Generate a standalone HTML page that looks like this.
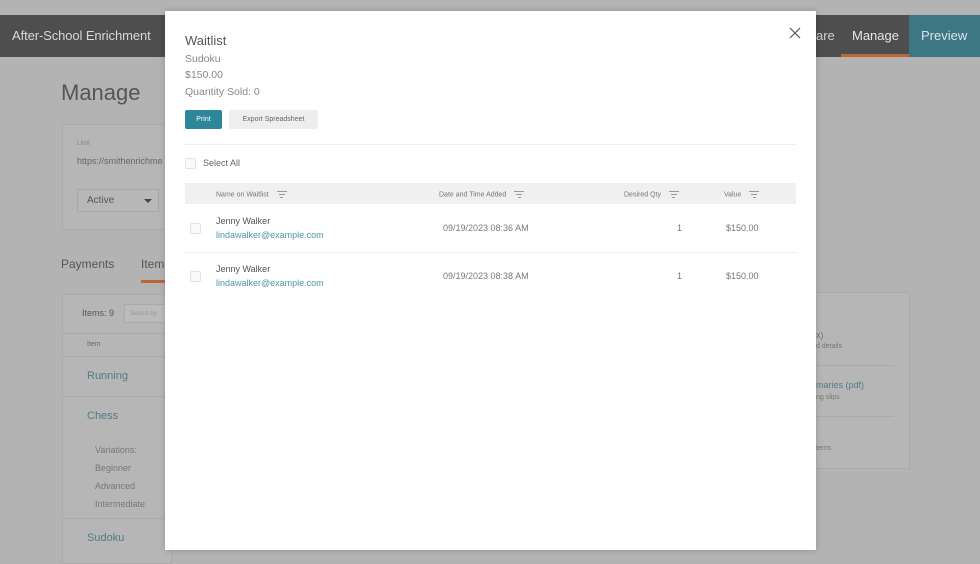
<!DOCTYPE html>
<html><head><meta charset="utf-8"><style>
*{box-sizing:border-box;margin:0;padding:0}
body{width:980px;height:560px;overflow:hidden;background:#b3b3b3;font-family:"Liberation Sans",sans-serif;position:relative;color:#5a5a5a}
.a{position:absolute;white-space:nowrap}
.nav{left:0;top:15px;width:980px;height:42px;background:#4e4e4e}
.panel{background:#b6b6b6;border:1px solid #ababab}
.modal{left:165px;top:11px;width:651px;height:539px;background:#fff;box-shadow:0 0 6px rgba(0,0,0,.2)}
.t{color:#888}
.cb{width:11px;height:11px;border:1px solid #e2e2e2;border-radius:2px;background:#fafafa}
.link{color:#4a98a5}
.fi{display:inline-block;width:10px;vertical-align:middle;margin-left:8px}
.fi i{display:block;height:1px;background:#999;margin:2px auto}
</style></head><body>
<div class="a nav"></div>
<div class="a" style="left:12px;top:28px;font-size:13px;color:#d8d8d8;letter-spacing:-0.1px">After-School Enrichment</div>
<div class="a" style="left:816px;top:28px;font-size:13px;color:#cfcfcf">are</div>
<div class="a" style="left:852px;top:28px;font-size:13px;color:#e6e6e6">Manage</div>
<div class="a" style="left:841px;top:54px;width:68px;height:3px;background:#c0643a"></div>
<div class="a" style="left:909px;top:15px;width:71px;height:42px;background:#3c7783"></div>
<div class="a" style="left:921px;top:28px;font-size:13px;color:#d6e6ea">Preview</div>

<div class="a" style="left:61px;top:80px;font-size:22px;color:#555">Manage</div>
<div class="a panel" style="left:62px;top:124px;width:120px;height:106px"></div>
<div class="a" style="left:77px;top:141px;font-size:6px;color:#888">LINK</div>
<div class="a" style="left:77px;top:156px;font-size:9px;color:#666">https://smithenrichme</div>
<div class="a" style="left:77px;top:189px;width:82px;height:23px;border:1px solid #a8a8a8;background:#b8b8b8"></div>
<div class="a" style="left:87px;top:195px;font-size:10px;color:#555">Active</div>
<div class="a" style="left:144px;top:199px;width:0;height:0;border-left:4px solid transparent;border-right:4px solid transparent;border-top:4px solid #444"></div>
<div class="a" style="left:61px;top:257px;font-size:12px;color:#555">Payments</div>
<div class="a" style="left:141px;top:257px;font-size:12px;color:#555">Item</div>
<div class="a" style="left:141px;top:280px;width:24px;height:3px;background:#c0643a"></div>
<div class="a panel" style="left:62px;top:294px;width:110px;height:270px"></div>
<div class="a" style="left:82px;top:308px;font-size:9px;color:#555">Items: 9</div>
<div class="a" style="left:124px;top:304px;width:45px;height:19px;border:1px solid #ababab;background:#bbb"></div>
<div class="a" style="left:130px;top:311px;font-size:6px;color:#999">Search by</div>
<div class="a" style="left:62px;top:333px;width:110px;height:1px;background:#aaa"></div>
<div class="a" style="left:87px;top:341px;font-size:7px;color:#666">Item</div>
<div class="a" style="left:62px;top:356px;width:110px;height:1px;background:#aaa"></div>
<div class="a" style="left:87px;top:370px;font-size:11px;color:#4f7c83">Running</div>
<div class="a" style="left:62px;top:396px;width:110px;height:1px;background:#aaa"></div>
<div class="a" style="left:87px;top:410px;font-size:11px;color:#4f7c83">Chess</div>
<div class="a" style="left:95px;top:441px;font-size:9px;color:#777;line-height:18px">Variations:<br>Beginner<br>Advanced<br>Intermediate</div>
<div class="a" style="left:62px;top:518px;width:110px;height:1px;background:#aaa"></div>
<div class="a" style="left:87px;top:532px;font-size:11px;color:#4f7c83">Sudoku</div>

<div class="a panel" style="left:815px;top:292px;width:95px;height:177px"></div>
<div class="a" style="left:816px;top:330px;font-size:9px;color:#557d84">x)</div>
<div class="a" style="left:816px;top:343px;font-size:7px;color:#777">d details</div>
<div class="a" style="left:816px;top:365px;width:78px;height:1px;background:#aaa"></div>
<div class="a" style="left:816px;top:380px;font-size:9px;color:#557d84">maries (pdf)</div>
<div class="a" style="left:816px;top:394px;font-size:7px;color:#777">ng slips</div>
<div class="a" style="left:816px;top:416px;width:78px;height:1px;background:#aaa"></div>
<div class="a" style="left:816px;top:445px;font-size:7px;color:#777">tems</div>

<div class="a modal"></div>
<svg class="a" style="left:789px;top:27px" width="12" height="12"><path d="M1 1L11 11M11 1L1 11" stroke="#555" stroke-width="1.2"/></svg>
<div class="a" style="left:185px;top:33px;font-size:13px;color:#555">Waitlist</div>
<div class="a t" style="left:185px;top:53px;font-size:10.5px">Sudoku</div>
<div class="a t" style="left:185px;top:69px;font-size:10.5px">$150.00</div>
<div class="a t" style="left:185px;top:86px;font-size:10.5px">Quantity Sold: 0</div>
<div class="a" style="left:185px;top:110px;width:37px;height:19px;background:#2d8799;border-radius:2px;color:#fff;font-size:7px;text-align:center;line-height:19px">Print</div>
<div class="a" style="left:229px;top:110px;width:89px;height:19px;background:#eee;border-radius:2px;color:#666;font-size:7px;text-align:center;line-height:19px">Export Spreadsheet</div>
<div class="a" style="left:185px;top:144px;width:611px;height:1px;background:#eee"></div>
<div class="a cb" style="left:185px;top:158px"></div>
<div class="a" style="left:203px;top:158px;font-size:9px;color:#666">Select All</div>
<div class="a" style="left:185px;top:183px;width:611px;height:21px;background:#f0f0f0"></div>
<div class="a" style="left:216px;top:189px;font-size:7px;color:#777">Name on Waitlist<span class="fi"><i style="width:10px"></i><i style="width:6px"></i><i style="width:3px"></i></span></div>
<div class="a" style="left:439px;top:189px;font-size:7px;color:#777">Date and Time Added<span class="fi"><i style="width:10px"></i><i style="width:6px"></i><i style="width:3px"></i></span></div>
<div class="a" style="left:624px;top:189px;font-size:7px;color:#777">Desired Qty<span class="fi"><i style="width:10px"></i><i style="width:6px"></i><i style="width:3px"></i></span></div>
<div class="a" style="left:724px;top:189px;font-size:7px;color:#777">Value<span class="fi"><i style="width:10px"></i><i style="width:6px"></i><i style="width:3px"></i></span></div>

<div class="a cb" style="left:190px;top:223px"></div>
<div class="a" style="left:216px;top:216px;font-size:9px;color:#555">Jenny Walker</div>
<div class="a link" style="left:216px;top:230px;font-size:9px">lindawalker@example.com</div>
<div class="a" style="left:443px;top:223px;font-size:9px;color:#777">09/19/2023 08:36 AM</div>
<div class="a" style="left:677px;top:223px;font-size:9px;color:#777">1</div>
<div class="a" style="left:726px;top:223px;font-size:9px;color:#777">$150.00</div>
<div class="a" style="left:185px;top:252px;width:611px;height:1px;background:#eee"></div>
<div class="a cb" style="left:190px;top:271px"></div>
<div class="a" style="left:216px;top:264px;font-size:9px;color:#555">Jenny Walker</div>
<div class="a link" style="left:216px;top:278px;font-size:9px">lindawalker@example.com</div>
<div class="a" style="left:443px;top:271px;font-size:9px;color:#777">09/19/2023 08:38 AM</div>
<div class="a" style="left:677px;top:271px;font-size:9px;color:#777">1</div>
<div class="a" style="left:726px;top:271px;font-size:9px;color:#777">$150.00</div>
</body></html>
